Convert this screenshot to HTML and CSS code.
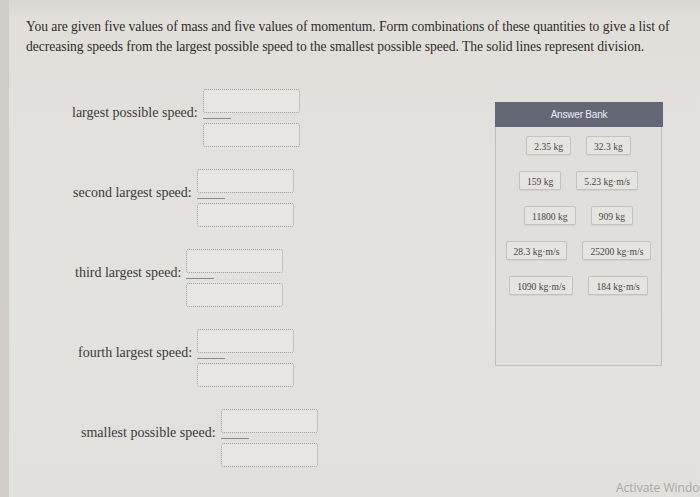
FILE: index.html
```html
<!DOCTYPE html>
<html lang="en">

<head>
  <meta charset="UTF-8">
  <meta name="viewport" content="width=device-width, initial-scale=1.0">
  <title>Ranking speeds</title>
  <link rel="stylesheet" href="styles.css">
</head>

<body>
  <div class="screen">
    <p class="prompt">You are given five values of mass and five values of momentum. Form combinations of these quantities to give a list of decreasing speeds from the largest possible speed to the smallest possible speed. The solid lines represent division.</p>

    <div class="main">
      <div class="questions">
        <div class="answer-row row-1">
          <label>largest possible speed:</label>
          <div class="fraction">
            <div class="drop"></div>
            <div class="bar"></div>
            <div class="drop"></div>
          </div>
        </div>
        <div class="answer-row row-2">
          <label>second largest speed:</label>
          <div class="fraction">
            <div class="drop"></div>
            <div class="bar"></div>
            <div class="drop"></div>
          </div>
        </div>
        <div class="answer-row row-3">
          <label>third largest speed:</label>
          <div class="fraction">
            <div class="drop"></div>
            <div class="bar"></div>
            <div class="drop"></div>
          </div>
        </div>
        <div class="answer-row row-4">
          <label>fourth largest speed:</label>
          <div class="fraction">
            <div class="drop"></div>
            <div class="bar"></div>
            <div class="drop"></div>
          </div>
        </div>
        <div class="answer-row row-5">
          <label>smallest possible speed:</label>
          <div class="fraction">
            <div class="drop"></div>
            <div class="bar"></div>
            <div class="drop"></div>
          </div>
        </div>
      </div>

      <div class="bank">
        <div class="bank-title">Answer Bank</div>
        <div class="bank-items">
          <div class="chip-row">
            <span class="chip">2.35 kg</span>
            <span class="chip">32.3 kg</span>
          </div>
          <div class="chip-row">
            <span class="chip">159 kg</span>
            <span class="chip">5.23 kg&middot;m/s</span>
          </div>
          <div class="chip-row">
            <span class="chip">11800 kg</span>
            <span class="chip">909 kg</span>
          </div>
          <div class="chip-row">
            <span class="chip">28.3 kg&middot;m/s</span>
            <span class="chip">25200 kg&middot;m/s</span>
          </div>
          <div class="chip-row">
            <span class="chip">1090 kg&middot;m/s</span>
            <span class="chip">184 kg&middot;m/s</span>
          </div>
        </div>
      </div>
    </div>

    <div class="watermark">Activate Windows</div>
  </div>
</body>

</html>
```

FILE: styles.css
```css
html,
body {
  margin: 0;
  padding: 0;
  height: 100%;
  overflow: hidden;
}

body {
  background: #dedbd7;
  font-family: "Liberation Serif", "Times New Roman", serif;
  color: #3a3836;
}

.screen {
  position: relative;
  height: 497px;
  box-sizing: border-box;
  border-left: 9px solid #cfccc8;
  background: linear-gradient(180deg, #d9d6d2 0px, #e2dfdb 18px, #e4e2df 60%, #e2e0dd 100%);
}

.prompt {
  margin: 0;
  padding: 17px 12px 0 17px;
  font-size: 13.6px;
  line-height: 20px;
  letter-spacing: -0.05px;
  color: #2f2d2a;
}

.main {
  display: flex;
  align-items: flex-start;
}

.questions {
  width: 486px;
  padding-top: 32px;
  display: flex;
  flex-direction: column;
  gap: 22px;
}

.answer-row {
  display: flex;
  align-items: center;
}

.answer-row label {
  font-size: 14px;
  line-height: 16px;
  margin-bottom: 10px;
  margin-right: 5px;
  color: #3d3b39;
}

.row-1 { padding-left: 63px; }
.row-2 { padding-left: 64px; }
.row-3 { padding-left: 66px; }
.row-4 { padding-left: 69px; }
.row-5 { padding-left: 72px; }

.fraction {
  display: flex;
  flex-direction: column;
  width: 97px;
}

.drop {
  height: 22px;
  border: 1px dotted #9e9b97;
  border-radius: 3px;
  background: #e8e6e3;
}

.bar {
  width: 28px;
  height: 10px;
  border-bottom: 1px solid #8c8985;
  box-sizing: border-box;
  transform: translateY(-4px);
}

.bank {
  margin-top: 45px;
  width: 167px;
  height: 264px;
  box-sizing: border-box;
  border: 1px solid #c2bfbb;
  background: #e1dfdc;
}

.bank-title {
  height: 25px;
  line-height: 25px;
  margin: -1px -2px 0 -1px;
  background: #646876;
  color: #eceef2;
  text-align: center;
  font-family: "Liberation Sans", Arial, sans-serif;
  font-size: 10px;
  letter-spacing: -0.2px;
}

.bank-items {
  padding-top: 9px;
  display: flex;
  flex-direction: column;
  gap: 16px;
}

.chip-row {
  display: flex;
  justify-content: center;
  gap: 15px;
}

.chip {
  height: 19px;
  line-height: 19px;
  padding: 0 7px;
  box-sizing: border-box;
  border: 1px solid #c6c3bf;
  border-radius: 2px;
  background: #e6e4e1;
  box-shadow: 0 1px 1px rgba(0, 0, 0, 0.06);
  font-size: 9.6px;
  color: #4a4845;
  white-space: nowrap;
}

.watermark {
  position: absolute;
  left: 607px;
  top: 479px;
  font-family: "Open Sans", "Liberation Sans", sans-serif;
  font-size: 12px;
  color: #aaa7a3;
  white-space: nowrap;
}
```
